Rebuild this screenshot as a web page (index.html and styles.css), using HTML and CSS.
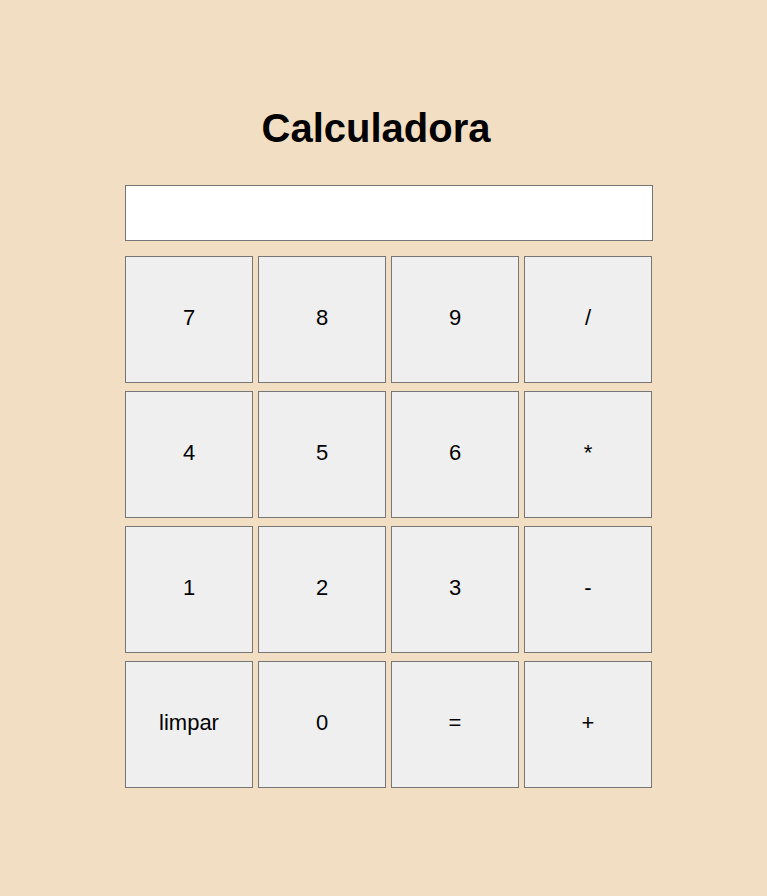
FILE: index.html
```html
<!DOCTYPE html>
<html lang="pt">
<head>
<meta charset="UTF-8">
<title>Calculadora</title>
<link rel="stylesheet" href="styles.css">
</head>
<body>
<div class="calculadora">
  <h1 class="titulo">Calculadora</h1>
  <input type="text" id="visor" class="visor" readonly>
  <div class="teclas">
    <button class="tecla" onclick="add('7')">7</button>
    <button class="tecla" onclick="add('8')">8</button>
    <button class="tecla" onclick="add('9')">9</button>
    <button class="tecla" onclick="add('/')">/</button>
    <button class="tecla" onclick="add('4')">4</button>
    <button class="tecla" onclick="add('5')">5</button>
    <button class="tecla" onclick="add('6')">6</button>
    <button class="tecla" onclick="add('*')">*</button>
    <button class="tecla" onclick="add('1')">1</button>
    <button class="tecla" onclick="add('2')">2</button>
    <button class="tecla" onclick="add('3')">3</button>
    <button class="tecla" onclick="add('-')">-</button>
    <button class="tecla" onclick="limpar()">limpar</button>
    <button class="tecla" onclick="add('0')">0</button>
    <button class="tecla" onclick="calcular()">=</button>
    <button class="tecla" onclick="add('+')">+</button>
  </div>
</div>

<script>
  const visor = document.getElementById('visor');

  function add(valor) {
    visor.value += valor;
  }

  function limpar() {
    visor.value = '';
  }

  function calcular() {
    try {
      visor.value = eval(visor.value);
    } catch (e) {
      visor.value = 'Erro';
    }
  }
</script>
</body>
</html>
```

FILE: styles.css
```css
body { font-family: "Liberation Sans", Arial, sans-serif; background-color: #f2dfc3; color: #000; margin: 0; padding: 0 15px 0 0; }
.calculadora { width: 502px; margin: 0 auto; padding-top: 105px; }
.titulo { font-size: 40px; font-weight: bold; text-align: center; margin: 0 0 34px 0; line-height: 46px; }
.visor { display: block; box-sizing: border-box; width: 528px; height: 56px; margin: 0 0 15px 0; padding: 0 10px; border: 1px solid #767676; background: #fff; font-family: inherit; font-size: 22px; outline: none; }
.teclas { display: grid; grid-template-columns: repeat(4, 128px); grid-auto-rows: 127px; column-gap: 5px; row-gap: 8px; }
.tecla { box-sizing: border-box; border: 1px solid #767676; border-radius: 0; background-color: #efefef; font-family: inherit; font-size: 22px; color: #000; padding: 0 0 3px 0; cursor: pointer; }
.tecla:hover { background-color: #e5e5e5; }
```
